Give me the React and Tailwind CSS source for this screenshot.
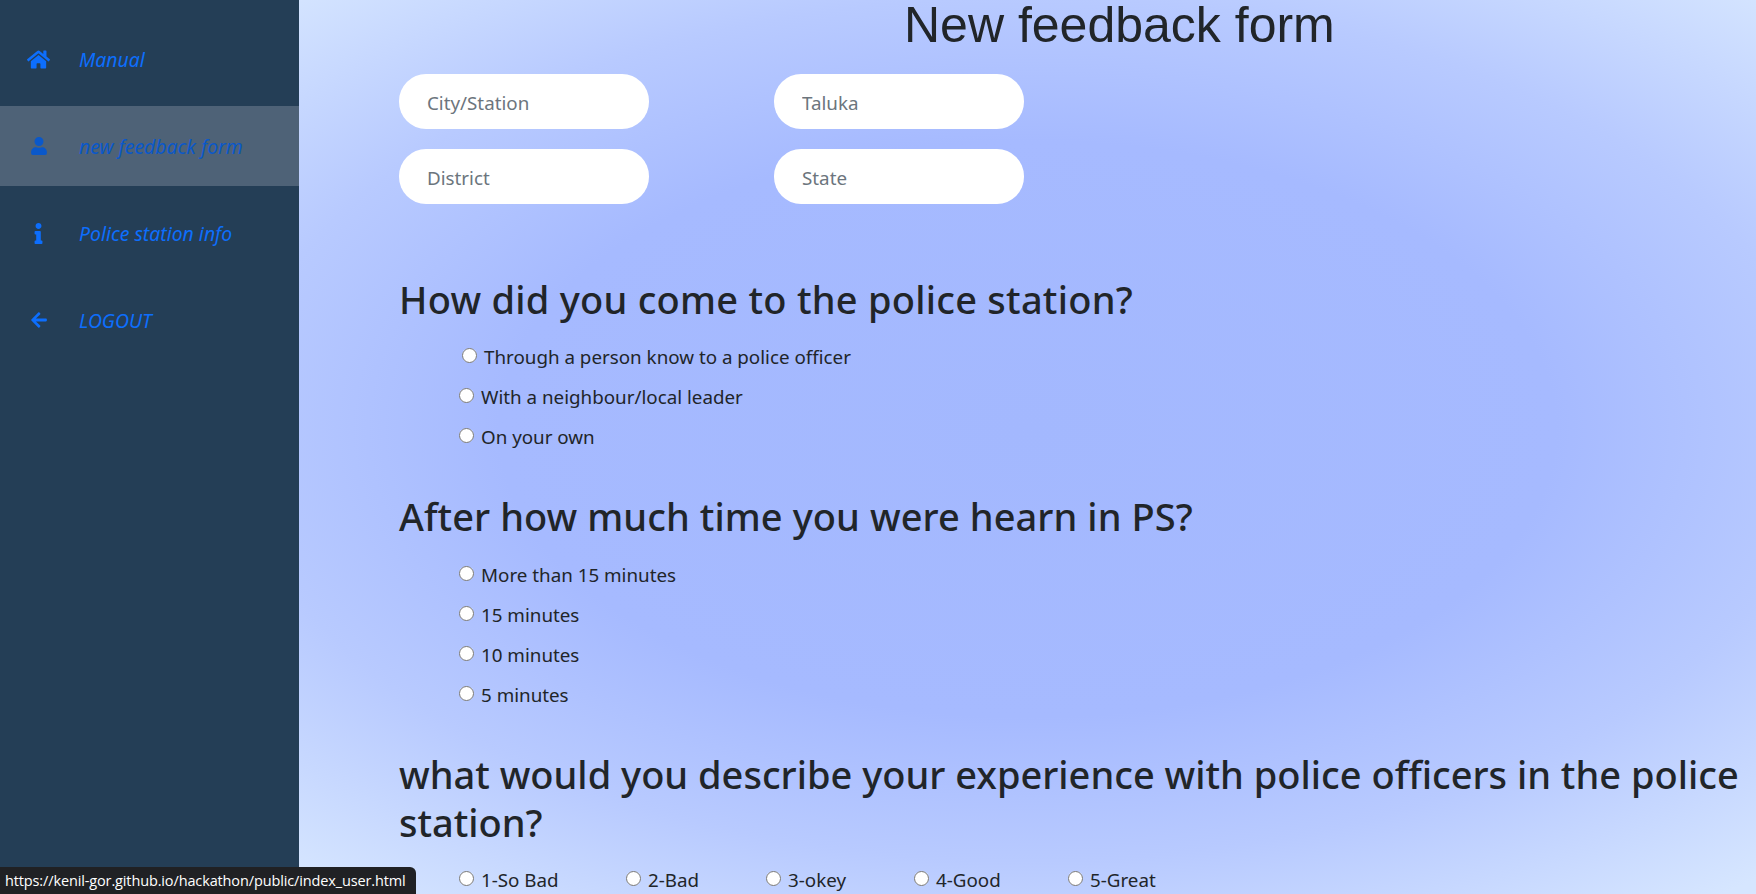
import { FaHome, FaUser, FaInfo, FaArrowLeft } from "react-icons/fa"

const links = [
  { label: "Manual", icon: FaHome, size: "text-[23px]" },
  { label: "new feedback form", icon: FaUser, size: "text-[18px]", active: true },
  { label: "Police station info", icon: FaInfo, size: "text-[21px]" },
  { label: "LOGOUT", icon: FaArrowLeft, size: "text-[18px]" },
]

const Option = ({ name, label, shift }) => (
  <label className={`flex items-center h-[40px] text-[18.8px] text-[#212529] ${shift ? "ml-[3px]" : ""}`}>
    <input type="radio" name={name} className="w-[15px] h-[15px] m-0 -mt-[3px]" />
    <span className="ml-[7px]">{label}</span>
  </label>
)

const Heading = ({ children, className }) => (
  <h2 className={`text-[38px] leading-[48px] font-medium text-[#212529] ${className}`}>
    {children}
  </h2>
)

const fields = ["City/Station", "Taluka", "District", "State"]
const ratings = [
  { label: "1-So Bad", w: "w-[167px]" },
  { label: "2-Bad", w: "w-[140px]" },
  { label: "3-okey", w: "w-[148px]" },
  { label: "4-Good", w: "w-[154px]" },
  { label: "5-Great", w: "w-auto" },
]

const App = () => {
  return (
    <div className="relative flex h-screen overflow-hidden font-['Noto_Sans','Open_Sans',sans-serif]">
      <aside className="w-[299px] shrink-0 bg-[#243e56] pt-[19px] flex flex-col gap-[7px]">
        {links.map((l) => (
          <a
            key={l.label}
            href="#"
            className={`flex items-center h-[80px] italic text-[19.4px] ${
              l.active ? "bg-[#4e6277] text-[#0a58ca]" : "text-[#0d6efd]"
            }`}
          >
            <span className="w-[79px] flex justify-center pr-[2px]">
              <l.icon className={l.size} />
            </span>
            <span className="pt-[2px]">{l.label}</span>
          </a>
        ))}
      </aside>

      <main className="flex-1 min-w-0 pl-[100px] bg-[radial-gradient(ellipse_1100px_600px_at_50%_48%,#a3b8fe_0%,#a6baff_48%,#b8caff_72%,#d6e6ff_100%)]">
        <h1 className="ml-[505px] h-[50px] leading-[50px] text-[50px] text-[#212529] whitespace-nowrap font-['Liberation_Sans',sans-serif]">
          New feedback form
        </h1>

        <div className="grid grid-cols-[250px_250px] gap-x-[125px] gap-y-[20px] mt-[24px]">
          {fields.map((f) => (
            <input
              key={f}
              placeholder={f}
              className="h-[55px] rounded-[27px] bg-white pl-[28px] pt-[2px] text-[18.8px] text-[#212529] placeholder:text-[#6c757d] outline-none"
            />
          ))}
        </div>

        <Heading className="mt-[71px] tracking-[0.25px]">How did you come to the police station?</Heading>
        <div className="pl-[60px] mt-[14px]">
          <Option name="how" shift label="Through a person know to a police officer" />
          <Option name="how" label="With a neighbour/local leader" />
          <Option name="how" label="On your own" />
        </div>

        <Heading className="mt-[35px] tracking-[0.07px]">After how much time you were hearn in PS?</Heading>
        <div className="pl-[60px] mt-[15px]">
          <Option name="time" label="More than 15 minutes" />
          <Option name="time" label="15 minutes" />
          <Option name="time" label="10 minutes" />
          <Option name="time" label="5 minutes" />
        </div>

        <Heading className="mt-[35px]">
          what would you describe your experience with police officers in the police station?
        </Heading>
        <div className="pl-[60px] mt-[14px] flex">
          {ratings.map((r) => (
            <div key={r.label} className={r.w}>
              <Option name="rate" label={r.label} />
            </div>
          ))}
        </div>
      </main>

      <div className="absolute left-0 bottom-0 h-[27px] w-[416px] bg-[#202124] rounded-tr-[6px] pl-[5px] flex items-center text-[14.5px] text-white whitespace-nowrap font-['Open_Sans',sans-serif] tracking-[-0.13px]">
        https://kenil-gor.github.io/hackathon/public/index_user.html
      </div>
    </div>
  )
}

export default App
